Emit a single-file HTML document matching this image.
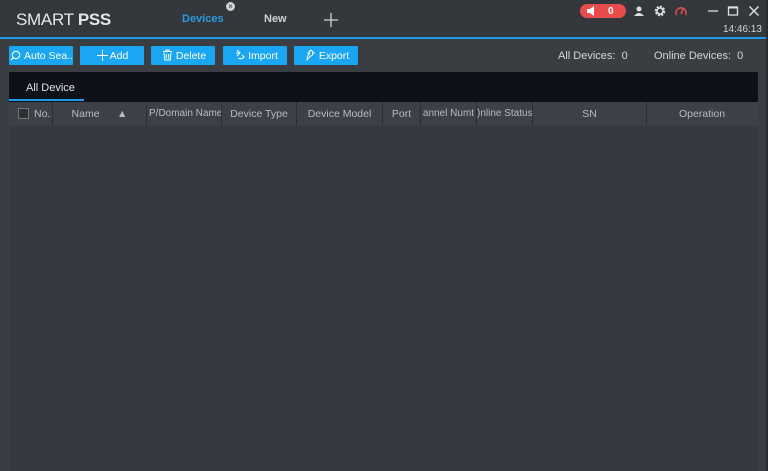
<!DOCTYPE html><html><head><style>
body{margin:0;width:768px;height:471px;background:#3a3d42;font-family:"Liberation Sans",sans-serif;overflow:hidden;position:relative;color:#cfd2d6}
div{position:absolute;box-sizing:border-box}
svg{position:absolute}
.btn{top:46px;height:19px;background:#1aa6f2;color:#fff;font-size:10.5px;line-height:20px;text-align:center;border-radius:1px;white-space:nowrap;overflow:hidden}
.h{top:102px;height:24px;line-height:24px;font-size:10.5px;color:#b8bcc2;text-align:center;border-right:1px solid #2c2f33;white-space:nowrap;overflow:hidden}
</style></head><body>
<div style="left:0;top:0;width:768px;height:38px;background:#34373b"></div>
<div style="left:16px;top:10px;font-size:17px;color:#e4e6e8;letter-spacing:-0.3px">SMART <b>PSS</b></div>
<div style="left:182px;top:13px;font-size:11px;font-weight:bold;color:#2a9ae0">Devices</div>
<div style="left:226px;top:2px;width:9px;height:9px;border-radius:50%;background:#cfd2d6;color:#34373b;font-size:8px;line-height:9px;text-align:center">×</div>
<div style="left:264px;top:13px;font-size:11px;font-weight:bold;color:#cfd2d6">New</div>
<svg style="left:323px;top:12px" width="16" height="16"><path d="M8 1V15M1 8H15" stroke="#cfd2d6" stroke-width="1.3"/></svg>
<div style="left:0;top:37px;width:768px;height:2px;background:#1e9bea"></div>
<div style="left:580px;top:4px;width:46px;height:14px;border-radius:7px;background:#e84c4c"></div>
<svg style="left:586px;top:6px" width="10" height="10"><path d="M1 3H4L8 0V10L4 7H1Z" fill="#fff"/></svg>
<div style="left:608px;top:6px;font-size:10px;font-weight:bold;color:#fff">0</div>
<svg style="left:634px;top:6px" width="10" height="10"><circle cx="5" cy="3" r="2.5" fill="#e0e0e0"/><path d="M0 10Q5 4 10 10Z" fill="#e0e0e0"/></svg>
<svg style="left:654px;top:5px" width="12" height="12"><circle cx="6" cy="6" r="4" fill="none" stroke="#e0e0e0" stroke-width="2.5" stroke-dasharray="2 1.1"/><circle cx="6" cy="6" r="3" fill="none" stroke="#e0e0e0" stroke-width="1.5"/></svg>
<svg style="left:675px;top:6px" width="12" height="10"><path d="M1.5 9A5 5 0 1 1 10.5 9" fill="none" stroke="#e84c4c" stroke-width="1.5"/><path d="M6 8L8 3" stroke="#e84c4c" stroke-width="1.5"/></svg>
<svg style="left:707px;top:5px" width="12" height="12"><path d="M1 6H11" stroke="#e0e0e0" stroke-width="1.3"/></svg>
<svg style="left:727px;top:5px" width="12" height="12"><rect x="1.5" y="2" width="9" height="8" fill="none" stroke="#e0e0e0" stroke-width="1.3"/><path d="M1.5 2.5H10.5" stroke="#e0e0e0" stroke-width="2"/></svg>
<svg style="left:748px;top:5px" width="12" height="12"><path d="M1.5 1.5L10.5 10.5M10.5 1.5L1.5 10.5" stroke="#e0e0e0" stroke-width="1.4"/></svg>
<div style="left:723px;top:24px;font-size:10px;color:#d4d6d8">14:46:13</div>
<div class="btn" style="left:9px;width:64px;text-align:left;padding-left:15px">Auto Sea...</div>
<svg style="left:10px;top:50px" width="11" height="11"><circle cx="6" cy="5" r="3.7" fill="none" stroke="#fff" stroke-width="1.1"/><path d="M3.3 7.7L1 10" stroke="#fff" stroke-width="1.2"/></svg>
<div class="btn" style="left:80px;width:64px;padding-left:14px">Add</div>
<svg style="left:97px;top:50px" width="11" height="11"><path d="M5.5 0V11M0 5.5H11" stroke="#fff" stroke-width="1"/></svg>
<div class="btn" style="left:151px;width:64px;padding-left:16px">Delete</div>
<svg style="left:162px;top:49px" width="11" height="12"><path d="M1 2.5H10M4 2.5V1H7V2.5M2 3.5L2.7 11H8.3L9 3.5M4.3 5V9.5M6.7 5V9.5" fill="none" stroke="#fff" stroke-width="1"/></svg>
<div class="btn" style="left:223px;width:64px;padding-left:16px">Import</div>
<svg style="left:234px;top:49px" width="11" height="12"><path d="M3 1L6 4L3 7M6 4H2M4 9Q7 11 10 8L8 6" fill="none" stroke="#fff" stroke-width="1"/></svg>
<div class="btn" style="left:294px;width:64px;padding-left:16px">Export</div>
<svg style="left:305px;top:49px" width="11" height="12"><path d="M6 1L9 4H7.5V6Q5 7 2 11Q2 6 4.5 5V4H3Z" fill="none" stroke="#fff" stroke-width="1"/></svg>
<div style="left:558px;top:50px;font-size:11px;color:#d4d6d8">All Devices:&nbsp; 0</div>
<div style="left:654px;top:50px;font-size:11px;color:#d4d6d8">Online Devices:&nbsp; 0</div>
<div style="left:9px;top:72px;width:749px;height:399px;background:#363a40"></div>
<div style="left:9px;top:72px;width:749px;height:30px;background:#0d1118"></div>
<div style="left:26px;top:82px;font-size:11px;color:#e0e2e4">All Device</div>
<div style="left:9px;top:99px;width:75px;height:2px;background:#1e9bea"></div>
<div style="left:9px;top:102px;width:749px;height:24px;background:#3d4046"></div>
<div class="h" style="left:9px;width:44px;text-align:left"><span style="display:inline-block;width:9px;height:9px;border:1px solid #777;background:#2c2f33;margin:0 5px 0 9px;vertical-align:-2px"></span>No.</div>
<div class="h" style="left:53px;width:94px">Name &nbsp;&nbsp;&nbsp;&nbsp;&nbsp;▲</div>
<div class="h" style="left:147px;width:75px;text-align:left;padding-left:2px;font-size:10px">P/Domain Name</div>
<div class="h" style="left:222px;width:75px">Device Type</div>
<div class="h" style="left:297px;width:86px">Device Model</div>
<div class="h" style="left:383px;width:38px">Port</div>
<div class="h" style="left:421px;width:56px;font-size:10px">annel Numt</div>
<div class="h" style="left:477px;width:56px;text-align:left;font-size:10px">)nline Status</div>
<div class="h" style="left:533px;width:114px">SN</div>
<div class="h" style="left:647px;width:110px;border:none">Operation</div>
<div style="left:766px;top:0;width:2px;height:471px;background:#2a2c30"></div>
</body></html>
